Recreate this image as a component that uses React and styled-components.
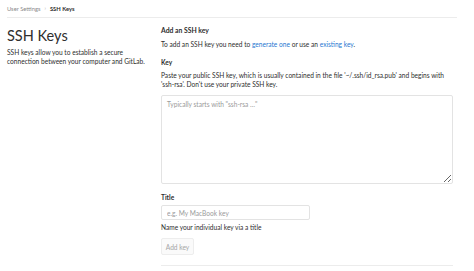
import React from "react";
import styled, { createGlobalStyle } from "styled-components";

const Global = createGlobalStyle`
  html, body { margin: 0; padding: 0; background: #fff; }
  body { font-family: Lato, "Noto Sans", sans-serif; color: #2e2e2e; }
  * { box-sizing: border-box; }
`;

const Page = styled.div`
  width: 474px;
  height: 271px;
  overflow: hidden;
  padding: 0 17px 0 7px;
`;

const Breadcrumb = styled.nav`
  display: flex;
  align-items: center;
  gap: 4px;
  height: 18px;
  border-bottom: 1px solid #ececec;
  font-size: 5.8px;
  color: #8a8a8a;
  padding-bottom: 1px;
`;

const Crumb = styled.span`
  color: ${(p) => (p.$current ? "#2e2e2e" : "#8a8a8a")};
  font-weight: ${(p) => (p.$current ? 700 : 400)};
`;

const Sep = styled.span`
  color: #b0b0b0;
  font-size: 5px;
`;

const Row = styled.div`
  display: grid;
  grid-template-columns: 147px 1fr;
  column-gap: 7px;
  padding-top: 8px;
`;

const Side = styled.div``;

const Heading = styled.h4`
  margin: 2px 0 4px;
  font-size: 14.5px;
  font-weight: 400;
  line-height: 16px;
  color: #2e2e2e;
`;

const Text = styled.p`
  margin: ${(p) => p.$m || "0"};
  font-size: 6.6px;
  line-height: 9px;
  color: #2e2e2e;
`;

const Main = styled.div`
  display: flex;
  flex-direction: column;
`;

const SubTitle = styled.h5`
  margin: 0;
  font-size: 6.8px;
  font-weight: 700;
  line-height: 9px;
`;

const Label = styled.label`
  display: block;
  font-size: 6.6px;
  font-weight: 700;
  line-height: 9px;
  margin: ${(p) => p.$m || "0"};
`;

const Link = styled.a`
  color: #1f78d1;
  text-decoration: none;
`;

const TextArea = styled.textarea`
  display: block;
  width: 292px;
  height: 89px;
  margin-top: 6px;
  padding: 4px 5px;
  border: 1px solid #e3e3e3;
  border-radius: 2px;
  font-family: inherit;
  font-size: 6.6px;
  line-height: 9px;
  resize: vertical;
  outline: none;
  &::placeholder { color: #9a9a9a; }
`;

const Input = styled.input`
  display: block;
  width: 149px;
  height: 15px;
  margin-top: 3px;
  padding: 0 5px;
  border: 1px solid #e3e3e3;
  border-radius: 2px;
  font-family: inherit;
  font-size: 6.6px;
  outline: none;
  &::placeholder { color: #9a9a9a; }
`;

const Button = styled.button`
  align-self: flex-start;
  width: 33px;
  height: 17px;
  margin-top: 6px;
  padding: 0;
  border: 1px solid #ededed;
  border-radius: 2px;
  background: #fafafa;
  color: #a5a5a5;
  font-family: inherit;
  font-size: 6.6px;
`;

const Divider = styled.hr`
  width: 292px;
  margin: 10px 0 0;
  border: 0;
  border-top: 1px solid #ececec;
`;

export default function App() {
  return (
    <>
      <Global />
      <Page>
        <Breadcrumb>
          <Crumb>User Settings</Crumb>
          <Sep>›</Sep>
          <Crumb $current>SSH Keys</Crumb>
        </Breadcrumb>
        <Row>
          <Side>
            <Heading>SSH Keys</Heading>
            <Text>
              SSH keys allow you to establish a secure connection between your computer and GitLab.
            </Text>
          </Side>
          <Main>
            <SubTitle>Add an SSH key</SubTitle>
            <Text $m="5px 0 0">
              To add an SSH key you need to <Link href="#">generate one</Link> or use an{" "}
              <Link href="#">existing key</Link>.
            </Text>
            <Label $m="9px 0 0">Key</Label>
            <Text $m="4px 0 0">
              Paste your public SSH key, which is usually contained in the file '~/.ssh/id_rsa.pub' and begins with 'ssh-rsa'. Don't use your private SSH key.
            </Text>
            <TextArea placeholder={'Typically starts with "ssh-rsa …"'} />
            <Label $m="9px 0 0">Title</Label>
            <Input placeholder="e.g. My MacBook key" />
            <Text $m="3px 0 0">Name your individual key via a title</Text>
            <Button disabled>Add key</Button>
            <Divider />
          </Main>
        </Row>
      </Page>
    </>
  );
}
